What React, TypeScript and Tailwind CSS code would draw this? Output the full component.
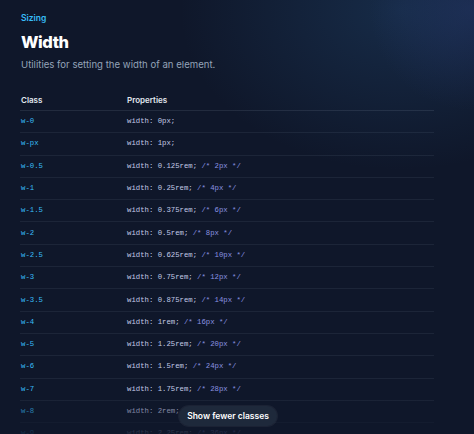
const rows: [string, string, string | null][] = [
  ['w-0', 'width: 0px;', null],
  ['w-px', 'width: 1px;', null],
  ['w-0.5', 'width: 0.125rem;', '/* 2px */'],
  ['w-1', 'width: 0.25rem;', '/* 4px */'],
  ['w-1.5', 'width: 0.375rem;', '/* 6px */'],
  ['w-2', 'width: 0.5rem;', '/* 8px */'],
  ['w-2.5', 'width: 0.625rem;', '/* 10px */'],
  ['w-3', 'width: 0.75rem;', '/* 12px */'],
  ['w-3.5', 'width: 0.875rem;', '/* 14px */'],
  ['w-4', 'width: 1rem;', '/* 16px */'],
  ['w-5', 'width: 1.25rem;', '/* 20px */'],
  ['w-6', 'width: 1.5rem;', '/* 24px */'],
  ['w-7', 'width: 1.75rem;', '/* 28px */'],
  ['w-8', 'width: 2rem;', '/* 32px */'],
  ['w-9', 'width: 2.25rem;', '/* 36px */'],
];

export default function App() {
  return (
    <div className="relative h-[434px] w-[474px] overflow-hidden bg-[#0f172a] font-['Inter',sans-serif]">
      {/* glow top right */}
      <div className="pointer-events-none absolute -top-[150px] left-[180px] h-[320px] w-[440px] rounded-full bg-[radial-gradient(closest-side,rgba(40,90,140,0.3),rgba(15,23,42,0))]" />
      <div className="pointer-events-none absolute -top-[90px] left-[370px] h-[200px] w-[200px] rounded-full bg-[radial-gradient(closest-side,rgba(50,70,140,0.28),rgba(15,23,42,0))]" />

      <div className="relative px-[21px] pt-[12px]">
        <p className="text-[8.5px] font-semibold leading-[12px] text-[#38bdf8]">Sizing</p>
        <h1 className="mt-[7px] text-[16.5px] font-extrabold leading-[22px] tracking-tight text-white">Width</h1>
        <p className="mt-[5px] text-[9.6px] leading-[14px] text-[#94a3b8]">Utilities for setting the width of an element.</p>

        <div className="mt-[18px] w-[414px] -ml-px">
          <div className="flex h-[21px] items-center border-b border-[#94a3b8]/15 pl-px text-[8px] font-semibold text-[#e2e8f0]">
            <div className="w-[106px]">Class</div>
            <div>Properties</div>
          </div>
          {rows.map(([cls, prop, comment]) => (
            <div
              key={cls}
              className="flex h-[22.3px] items-center border-b border-[#94a3b8]/10 pl-px font-['Liberation_Mono',monospace] text-[7.3px]"
            >
              <div className="w-[106px] text-[#38bdf8]">{cls}</div>
              <div className="whitespace-pre text-[#c3cae6]">
                {prop}
                {comment ? <span className="text-[#8b93e0]"> {comment}</span> : null}
              </div>
            </div>
          ))}
        </div>
      </div>

      {/* bottom fade */}
      <div className="pointer-events-none absolute bottom-0 left-0 h-[40px] w-full bg-gradient-to-b from-[#0f172a]/0 to-[#0f172a]/90" />

      <div className="absolute bottom-[8px] left-0 flex w-full justify-center">
        <button className="ml-[-18px] h-[20px] rounded-full bg-[#1e293b] px-[8px] text-[8.5px] font-semibold text-white shadow-[0_0_0_1px_rgba(255,255,255,0.05)]">
          Show fewer classes
        </button>
      </div>
    </div>
  );
}
